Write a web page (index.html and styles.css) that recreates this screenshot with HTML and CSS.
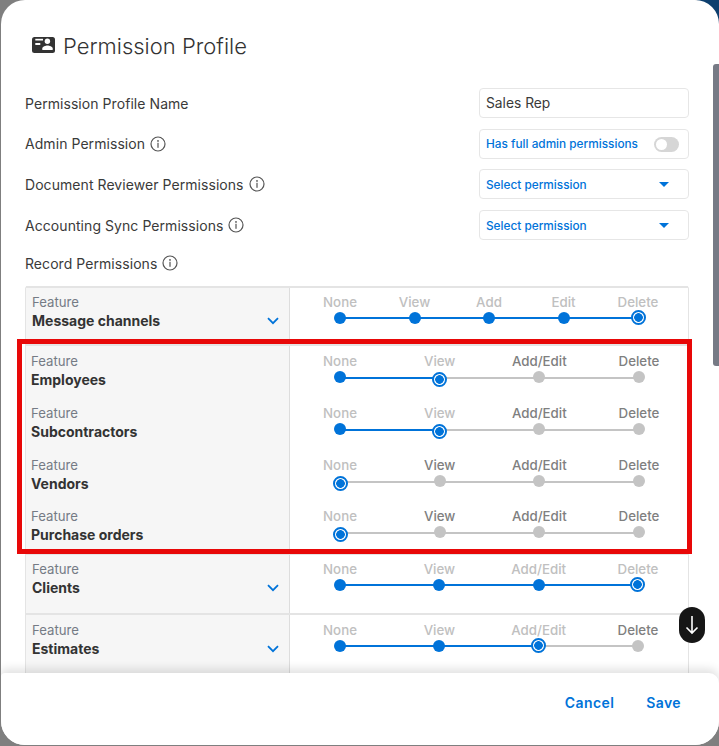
FILE: index.html
```html
<!DOCTYPE html>
<html lang="en">
<head>
    <meta charset="UTF-8">
    <title>Permission Profile</title>
    <link rel="stylesheet" href="styles.css">
</head>
<body>
    <div class="modal">
        <div class="scroll-area">
            <div class="modal-head">
                <svg class="card-icon" viewBox="0 0 23 16" width="23" height="16">
                    <rect width="23" height="16" rx="2.5" fill="#333"/>
                    <rect x="3.3" y="1.8" width="7.7" height="1.7" fill="#fff"/>
                    <rect x="3.3" y="6" width="5" height="2" fill="#fff"/>
                    <circle cx="15.4" cy="4.2" r="2.7" fill="#fff"/>
                    <path d="M10.3 13v-1.6c0-1.9 3.4-3 5.2-3s5.2 1.1 5.2 3V13z" fill="#fff"/>
                </svg>
                <h1>Permission Profile</h1>
            </div>

            <div class="form-row">
                <label>Permission Profile Name</label>
                <div class="field field-value">Sales Rep</div>
            </div>
            <div class="form-row">
                <label>Admin Permission
                    <svg class="info" viewBox="0 0 16 16" width="16" height="16"><circle cx="8" cy="8" r="7" fill="none" stroke="#555" stroke-width="1.2"/><circle cx="8" cy="4.9" r="0.9" fill="#555"/><rect x="7.4" y="6.8" width="1.2" height="5" fill="#555"/></svg>
                </label>
                <div class="field">Has full admin permissions <span class="toggle"></span></div>
            </div>
            <div class="form-row">
                <label>Document Reviewer Permissions
                    <svg class="info" viewBox="0 0 16 16" width="16" height="16"><circle cx="8" cy="8" r="7" fill="none" stroke="#555" stroke-width="1.2"/><circle cx="8" cy="4.9" r="0.9" fill="#555"/><rect x="7.4" y="6.8" width="1.2" height="5" fill="#555"/></svg>
                </label>
                <div class="field">Select permission <span class="caret"></span></div>
            </div>
            <div class="form-row">
                <label>Accounting Sync Permissions
                    <svg class="info" viewBox="0 0 16 16" width="16" height="16"><circle cx="8" cy="8" r="7" fill="none" stroke="#555" stroke-width="1.2"/><circle cx="8" cy="4.9" r="0.9" fill="#555"/><rect x="7.4" y="6.8" width="1.2" height="5" fill="#555"/></svg>
                </label>
                <div class="field">Select permission <span class="caret"></span></div>
            </div>

            <div class="record-title">Record Permissions
                <svg class="info" viewBox="0 0 16 16" width="16" height="16"><circle cx="8" cy="8" r="7" fill="none" stroke="#555" stroke-width="1.2"/><circle cx="8" cy="4.9" r="0.9" fill="#555"/><rect x="7.4" y="6.8" width="1.2" height="5" fill="#555"/></svg>
            </div>

            <div class="perm-table">
                <div class="perm-row first">
                    <div class="feature">
                        <div class="feature-text"><span>Feature</span><b>Message channels</b></div>
                        <svg class="chevron" viewBox="0 0 12 8" width="12" height="8"><path d="M1 1.2l5 5 5-5" fill="none" stroke="#0073d9" stroke-width="1.8"/></svg>
                    </div>
                    <div class="levels">
                        <div class="slider">
                            <div class="track"><div class="fill" style="width:100%"></div></div>
                            <div class="step"><span>None</span><i class="dot done"></i></div>
                            <div class="step"><span>View</span><i class="dot done"></i></div>
                            <div class="step"><span>Add</span><i class="dot done"></i></div>
                            <div class="step"><span>Edit</span><i class="dot done"></i></div>
                            <div class="step"><span>Delete</span><i class="dot current"></i></div>
                        </div>
                    </div>
                </div>

                <div class="sub-group">
                    <div class="perm-row sub">
                        <div class="feature"><div class="feature-text"><span>Feature</span><b>Employees</b></div></div>
                        <div class="levels">
                            <div class="slider">
                                <div class="track"><div class="fill" style="width:33.33%"></div></div>
                                <div class="step"><span>None</span><i class="dot done"></i></div>
                                <div class="step"><span>View</span><i class="dot current"></i></div>
                                <div class="step open"><span>Add/Edit</span><i class="dot"></i></div>
                                <div class="step open"><span>Delete</span><i class="dot"></i></div>
                            </div>
                        </div>
                    </div>
                    <div class="perm-row sub">
                        <div class="feature"><div class="feature-text"><span>Feature</span><b>Subcontractors</b></div></div>
                        <div class="levels">
                            <div class="slider">
                                <div class="track"><div class="fill" style="width:33.33%"></div></div>
                                <div class="step"><span>None</span><i class="dot done"></i></div>
                                <div class="step"><span>View</span><i class="dot current"></i></div>
                                <div class="step open"><span>Add/Edit</span><i class="dot"></i></div>
                                <div class="step open"><span>Delete</span><i class="dot"></i></div>
                            </div>
                        </div>
                    </div>
                    <div class="perm-row sub">
                        <div class="feature"><div class="feature-text"><span>Feature</span><b>Vendors</b></div></div>
                        <div class="levels">
                            <div class="slider">
                                <div class="track"></div>
                                <div class="step"><span>None</span><i class="dot current"></i></div>
                                <div class="step open"><span>View</span><i class="dot"></i></div>
                                <div class="step open"><span>Add/Edit</span><i class="dot"></i></div>
                                <div class="step open"><span>Delete</span><i class="dot"></i></div>
                            </div>
                        </div>
                    </div>
                    <div class="perm-row sub">
                        <div class="feature"><div class="feature-text"><span>Feature</span><b>Purchase orders</b></div></div>
                        <div class="levels">
                            <div class="slider">
                                <div class="track"></div>
                                <div class="step"><span>None</span><i class="dot current"></i></div>
                                <div class="step open"><span>View</span><i class="dot"></i></div>
                                <div class="step open"><span>Add/Edit</span><i class="dot"></i></div>
                                <div class="step open"><span>Delete</span><i class="dot"></i></div>
                            </div>
                        </div>
                    </div>
                </div>

                <div class="perm-row">
                    <div class="feature">
                        <div class="feature-text"><span>Feature</span><b>Clients</b></div>
                        <svg class="chevron" viewBox="0 0 12 8" width="12" height="8"><path d="M1 1.2l5 5 5-5" fill="none" stroke="#0073d9" stroke-width="1.8"/></svg>
                    </div>
                    <div class="levels">
                        <div class="slider">
                            <div class="track"><div class="fill" style="width:100%"></div></div>
                            <div class="step"><span>None</span><i class="dot done"></i></div>
                            <div class="step"><span>View</span><i class="dot done"></i></div>
                            <div class="step"><span>Add/Edit</span><i class="dot done"></i></div>
                            <div class="step"><span>Delete</span><i class="dot current"></i></div>
                        </div>
                    </div>
                </div>
                <div class="perm-row last">
                    <div class="feature">
                        <div class="feature-text"><span>Feature</span><b>Estimates</b></div>
                        <svg class="chevron" viewBox="0 0 12 8" width="12" height="8"><path d="M1 1.2l5 5 5-5" fill="none" stroke="#0073d9" stroke-width="1.8"/></svg>
                    </div>
                    <div class="levels">
                        <div class="slider">
                            <div class="track"><div class="fill" style="width:66.66%"></div></div>
                            <div class="step"><span>None</span><i class="dot done"></i></div>
                            <div class="step"><span>View</span><i class="dot done"></i></div>
                            <div class="step"><span>Add/Edit</span><i class="dot current"></i></div>
                            <div class="step open"><span>Delete</span><i class="dot"></i></div>
                        </div>
                    </div>
                </div>
            </div>
        </div>

        <div class="scrollbar"></div>
        <div class="scroll-down">
            <svg viewBox="0 0 14 22" width="14" height="22"><path d="M7 2v17M1.5 13.5L7 19l5.5-5.5" fill="none" stroke="#fff" stroke-width="1.6"/></svg>
        </div>

        <div class="modal-foot">
            <button>Cancel</button>
            <button>Save</button>
        </div>
    </div>
</body>
</html>
```

FILE: styles.css
```css
html, body {
    height: 100%;
}

body {
    margin: 0;
    overflow: hidden;
    font-family: Inter, "Liberation Sans", sans-serif;
    color: #3a3a3a;
    background: linear-gradient(to left, #0d3f6e 0, #0d3f6e 22px, #7f7f7f 22px) top / 100% 30px no-repeat, #7f7f7f;
}

.modal {
    position: relative;
    display: flex;
    flex-direction: column;
    height: 745px;
    margin-left: 1px;
    background: #fff;
    border-radius: 24px;
    overflow: hidden;
}

.scroll-area {
    flex: 1;
    min-height: 0;
    padding: 0 30px 0 24px;
    overflow: hidden;
}

.modal-head {
    display: flex;
    align-items: center;
    gap: 8px;
    height: 88px;
    padding: 4px 0 0 7px;
    box-sizing: border-box;
}

.modal-head h1 {
    margin: 0;
    font-size: 22px;
    font-weight: 300;
    color: #333;
}

.card-icon {
    margin-top: -2px;
}

.form-row {
    display: flex;
    justify-content: space-between;
    align-items: center;
    height: 30px;
    margin-bottom: 10.7px;
}

.form-row label, .record-title {
    display: flex;
    align-items: center;
    gap: 5px;
    font-size: 14px;
    letter-spacing: 0.06px;
    color: #3a3a3a;
}

.field {
    display: flex;
    justify-content: space-between;
    align-items: center;
    width: 210px;
    height: 30px;
    padding: 1px 9px 0 6px;
    box-sizing: border-box;
    border: 1px solid #e6e6e6;
    border-radius: 4px;
    font-size: 11.8px;
    font-weight: 500;
    color: #0073d9;
}

.field-value {
    padding-top: 0;
    font-size: 13.8px;
    font-weight: 400;
    color: #3a3a3a;
}

.toggle {
    position: relative;
    width: 25px;
    height: 15px;
    border-radius: 8px;
    background: #d6d6d6;
}

.toggle::after {
    content: "";
    position: absolute;
    left: 2px;
    top: 2px;
    width: 11px;
    height: 11px;
    border-radius: 50%;
    background: #fff;
}

.caret {
    width: 0;
    height: 0;
    margin-right: 10px;
    border-left: 5.5px solid transparent;
    border-right: 5.5px solid transparent;
    border-top: 5.5px solid #0073d9;
}

.record-title {
    height: 46px;
    margin-top: -10.7px;
}

.perm-table {
    border: 1px solid #e4e4e4;
    border-top: none;
    border-radius: 3px 3px 0 0;
}

.perm-row {
    display: grid;
    grid-template-columns: 264px 1fr;
    min-height: 60px;
    box-sizing: border-box;
    border-top: 2px solid #e4e4e4;
}

.perm-row.first {
    min-height: 58px;
}

.perm-row.sub {
    min-height: 0;
    height: 51.75px;
    border-top: none;
}

.feature {
    display: flex;
    justify-content: space-between;
    align-items: flex-start;
    padding: 6px 10px 0 6px;
    background: #f6f6f6;
    border-right: 1px solid #ddd;
}

.sub .feature {
    padding: 7px 0 0 5px;
}

.last .feature {
    padding-top: 7px;
}

.sub-group {
    position: relative;
    border-top: 2px solid #e4e4e4;
}

/* red annotation frame */
.sub-group::after {
    content: "";
    position: absolute;
    left: -9px;
    right: -4px;
    top: -7px;
    bottom: -1px;
    border: 5px solid #e80808;
    pointer-events: none;
}

.feature-text span {
    display: block;
    font-size: 13.2px;
    line-height: 17px;
    color: #757b85;
}

.feature-text b {
    display: block;
    font-size: 14px;
    line-height: 20px;
    font-weight: 700;
    color: #333;
}

.chevron {
    margin-top: 23px;
}

.levels {
    padding: 6px 20px 0 20px;
}

.sub .levels {
    padding: 7px 19px 0 20px;
}

.last .levels {
    padding-top: 7px;
}

.slider {
    position: relative;
    display: flex;
    justify-content: space-between;
}

.track {
    position: absolute;
    left: 30px;
    right: 30px;
    top: 23px;
    height: 2px;
    background: #c4c4c4;
}

.sub .track {
    top: 24px;
}

.fill {
    height: 100%;
    background: #0073d9;
}

.step {
    position: relative;
    display: flex;
    flex-direction: column;
    align-items: center;
    width: 60px;
}

.step span {
    font-size: 13.3px;
    line-height: 16px;
    font-weight: 500;
    color: #c0c0c0;
}

.step.open span {
    color: #7f7f7f;
}

.dot {
    display: block;
    width: 12px;
    height: 12px;
    margin-top: 1.5px;
    border-radius: 50%;
    background: #c4c4c4;
}

.sub .dot {
    margin-top: 2px;
}

.dot.done {
    background: #0073d9;
}

.dot.current {
    box-sizing: border-box;
    width: 15px;
    height: 15px;
    margin-top: 0;
    border: 2px solid #0073d9;
    background: radial-gradient(circle, #0073d9 0, #0073d9 4px, #fff 4.6px);
}

.sub .dot.current {
    margin-top: 3px;
}

.scrollbar {
    position: absolute;
    right: 0;
    top: 64px;
    width: 6px;
    height: 302px;
    background: #767a85;
    border-radius: 3px 0 0 3px;
}

.scroll-down {
    position: absolute;
    left: 678px;
    top: 607px;
    display: flex;
    justify-content: center;
    align-items: center;
    width: 26px;
    height: 36px;
    background: #161616;
    border-radius: 13px;
}

.modal-foot {
    position: relative;
    display: flex;
    justify-content: flex-end;
    align-items: center;
    gap: 32px;
    height: 72px;
    padding: 0 38px 14px 0;
    box-sizing: border-box;
    background: #fff;
    border-radius: 4px 10px 0 0;
    box-shadow: 0 -4px 10px rgba(0, 0, 0, 0.12);
}

.modal-foot button {
    padding: 0;
    border: none;
    background: none;
    font-family: inherit;
    font-size: 14px;
    font-weight: 600;
    letter-spacing: 0.4px;
    color: #0073d9;
    cursor: pointer;
}
```
